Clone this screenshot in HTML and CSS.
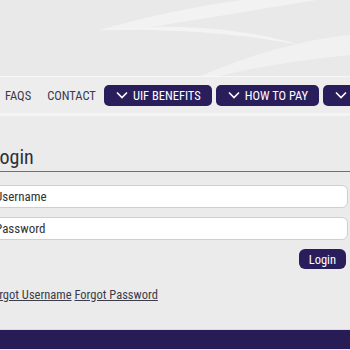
FILE: index.html
```html
<!DOCTYPE html>
<html>
<head>
<meta charset="utf-8">
<link rel="stylesheet" href="styles.css">
</head>
<body>
<header class="hero">
  <svg class="swoosh" width="350" height="76" viewBox="0 0 350 76" preserveAspectRatio="none">
    <path d="M100 30 C170 10 230 0 290 -5 L350 -5 C280 5 200 20 130 30 Z" fill="#f2f2f2"/>
    <path d="M100 30 C180 22 250 30 300 45 C250 35 180 28 100 30 Z" fill="#f3f3f3"/>
    <path d="M200 76 C250 55 300 40 350 35 L350 55 C300 60 250 68 220 76 Z" fill="#f1f1f1"/>
  </svg>
</header>
<nav class="nav">
  <a class="link">FAQS</a>
  <a class="link">CONTACT</a>
  <a class="btn"><svg class="chev" width="12" height="8" viewBox="0 0 12 8"><path d="M1 1.5 L6 6.5 L11 1.5" fill="none" stroke="#fff" stroke-width="1.6"/></svg>UIF BENEFITS</a>
  <a class="btn"><svg class="chev" width="12" height="8" viewBox="0 0 12 8"><path d="M1 1.5 L6 6.5 L11 1.5" fill="none" stroke="#fff" stroke-width="1.6"/></svg>HOW TO PAY</a>
  <a class="btn"><svg class="chev" width="12" height="8" viewBox="0 0 12 8"><path d="M1 1.5 L6 6.5 L11 1.5" fill="none" stroke="#fff" stroke-width="1.6"/></svg>MORE</a>
</nav>
<main class="main">
  <h2 class="title">Login</h2>
  <div class="field"><input class="input" placeholder="Username"></div>
  <div class="field"><input class="input" type="password" placeholder="Password"></div>
  <div class="actions"><button class="login">Login</button></div>
  <div class="forgot"><a class="flink">Forgot Username</a> <a class="flink">Forgot Password</a></div>
</main>
<footer class="footer"></footer>
</body>
</html>
```
FILE: styles.css
```css
html, body { margin: 0; padding: 0; }
body {
  width: 350px;
  height: 350px;
  overflow: hidden;
  background: #ebebeb;
  font-family: Roboto, "Open Sans", sans-serif;
  font-stretch: 75%;
}
.hero {
  height: 76px;
  background: #e9e9e9;
  border-bottom: 1px solid #f7f7f7;
}
.swoosh { display: block; }
.nav {
  height: 36px;
  display: flex;
  align-items: center;
  padding-left: 5px;
  white-space: nowrap;
  background: #ededed;
  border-bottom: 3px solid #f4f4f4;
}
.link {
  font-size: 12.5px;
  color: #3a3a50;
  margin-right: 16px;
}
.link + .link { margin-right: 8px; }
.btn {
  display: flex;
  align-items: center;
  flex-shrink: 0;
  height: 21px;
  padding: 0 11px 0 12px;
  margin-right: 4px;
  background: #2a1d5c;
  color: #fff;
  border-radius: 5px;
  font-size: 12.5px;
}
.chev { margin-right: 5px; }
.main {
  margin-left: -10px;
  padding-top: 30px;
  height: 183px;
}
.title {
  margin: 0 0 13px 0;
  font-size: 20px;
  font-weight: normal;
  color: #2e2e3a;
  line-height: 23px;
  border-bottom: 1px solid #6e6b8c;
  padding-bottom: 2px;
}
.field { margin-bottom: 9px; }
.input {
  display: block;
  box-sizing: border-box;
  width: 358px;
  height: 23px;
  border: 1px solid #cfcfcf;
  border-radius: 6px;
  background: #fff;
  padding: 0 4px;
  font-family: inherit;
  font-stretch: inherit;
  font-size: 13px;
}
.input::placeholder { color: #333; }
.actions {
  display: flex;
  justify-content: flex-end;
  width: 356px;
}
.login {
  background: #2a1d5c;
  color: #fff;
  border: none;
  border-radius: 6px;
  height: 20px;
  padding: 0 10px;
  font-family: inherit;
  font-stretch: inherit;
  font-size: 12.5px;
}
.forgot {
  margin-top: 18px;
  margin-left: -3px;
  font-size: 12.5px;
  color: #3c3c4a;
}
.flink { text-decoration: underline; }
.footer {
  height: 19px;
  background: #271c55;
  border-top: 1px solid #dcdcdc;
}
```
